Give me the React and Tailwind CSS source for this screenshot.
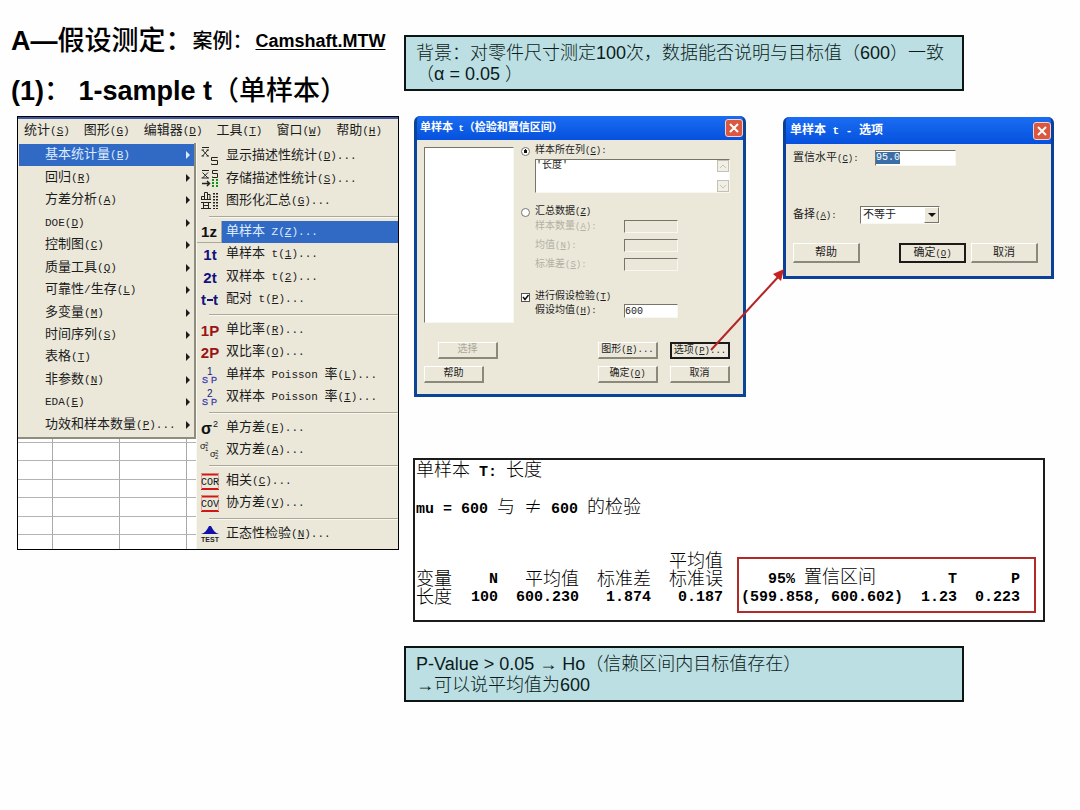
import React, { useState } from "react";

const menuBar = ["统计(S)", "图形(G)", "编辑器(D)", "工具(T)", "窗口(W)", "帮助(H)"];

const statMenu = [
  "基本统计量(B)",
  "回归(R)",
  "方差分析(A)",
  "DOE(D)",
  "控制图(C)",
  "质量工具(Q)",
  "可靠性/生存(L)",
  "多变量(M)",
  "时间序列(S)",
  "表格(T)",
  "非参数(N)",
  "EDA(E)",
  "功效和样本数量(P)...",
];

const basicMenu = [
  [
    { icon: "display", text: "显示描述性统计(D)..." },
    { icon: "store", text: "存储描述性统计(S)..." },
    { icon: "graph", text: "图形化汇总(G)..." },
  ],
  [
    { icon: "1Z", text: "单样本 Z(Z)...", active: true },
    { icon: "1t", text: "单样本 t(1)..." },
    { icon: "2t", text: "双样本 t(2)..." },
    { icon: "tt", text: "配对 t(P)..." },
  ],
  [
    { icon: "1P", text: "单比率(R)..." },
    { icon: "2P", text: "双比率(O)..." },
    { icon: "s1p", text: "单样本 Poisson 率(L)..." },
    { icon: "s2p", text: "双样本 Poisson 率(I)..." },
  ],
  [
    { icon: "var1", text: "单方差(E)..." },
    { icon: "var2", text: "双方差(A)..." },
  ],
  [
    { icon: "COR", text: "相关(C)..." },
    { icon: "COV", text: "协方差(V)..." },
  ],
  [{ icon: "test", text: "正态性检验(N)..." }],
];

// Latin runs are set smaller than the Chinese ones, the letter in brackets is the shortcut
const Mixed = ({ text, latin = "text-[11px]" }) => {
  const parts = text.split(/([\x20-\x7e]+)/).filter(Boolean);
  return (
    <span className="whitespace-pre">
      {parts.map((part, i) => {
        if (!/^[\x20-\x7e]/.test(part)) return <span key={i}>{part}</span>;
        const key = part.match(/^(.*\()(\w)(\).*)$/);
        return (
          <span key={i} className={latin}>
            {key ? (
              <>
                {key[1]}
                <u className="underline-offset-1">{key[2]}</u>
                {key[3]}
              </>
            ) : (
              part
            )}
          </span>
        );
      })}
    </span>
  );
};

const BigIcon = ({ text, color }) => (
  <text x="10" y="16" textAnchor="middle" fontSize="15" fontWeight="bold" fill={color}>
    {text}
  </text>
);

const BoxIcon = ({ text }) => (
  <>
    <path d="M1 3.5H19M1 18H19" stroke="#d01818" strokeWidth="2" />
    <path d="M1.500 3V18M18.500 3V18" stroke="#e9a49a" />
    <text
      x="10"
      y="14"
      textAnchor="middle"
      fontSize="10"
      fontFamily="Liberation Mono, monospace"
      fill="#111"
    >
      {text}
    </text>
  </>
);

const PoissonIcon = ({ n }) => (
  <>
    <text x="2" y="18" fontSize="9" fill="#3b3bb0" stroke="#3b3bb0" strokeWidth="0.300">S</text>
    <text x="11" y="18" fontSize="9" fill="#3b3bb0" stroke="#3b3bb0" strokeWidth="0.300">P</text>
    <text x="7" y="10" fontSize="10" fill="#15157a">{n}</text>
  </>
);

const icons = {
  display: (
    <>
      <path d="M2 1.500H9M2.500 4L8 10M8 4L2.500 10M1.500 10H4M6.500 10H9M1.500 4H4M6.500 4H9" stroke="#222" fill="none" />
      <path d="M17.500 12V11.500H11.500V14.500H17.500V18.500H11.500V17.500" stroke="#222" fill="none" />
    </>
  ),
  store: (
    <>
      <path d="M2 1.500H9M2.500 3.500L8 9M8 3.500L2.500 9M1.500 9H9" stroke="#222" fill="none" />
      <path d="M17.500 2V1.500H12.500V4.500H17.500V8.500H12.500V7.500" stroke="#222" fill="none" />
      <path d="M2 14.500H9M7 12L9.500 14.500L7 17" stroke="#222" fill="none" strokeWidth="1.500" />
      <path d="M13 10V19M17 10V19" stroke="#159015" strokeWidth="2" strokeDasharray="2 1" />
    </>
  ),
  graph: (
    <>
      <path
        d="M1.500 8.500V5.500H4.500V1.500H7.500V8.500M4.500 5V8.500M7.500 3.500H10V8.500M1 8.500H11M1 11.500H11M3.500 11.500V17.500M8.500 11.500V17.500M1 17.500H11M3.500 14.500H8.500"
        stroke="#222"
        fill="none"
      />
      <path d="M14 2V18M17 2V18" stroke="#222" strokeWidth="2" strokeDasharray="1.500 1.500" />
    </>
  ),
  "1Z": <BigIcon text="1z" color="#111" />,
  "1t": <BigIcon text="1t" color="#12127c" />,
  "2t": <BigIcon text="2t" color="#12127c" />,
  tt: (
    <>
      <text x="1" y="16" fontSize="15" fontWeight="bold" fill="#12127c">t</text>
      <text x="13" y="16" fontSize="15" fontWeight="bold" fill="#12127c">t</text>
      <path d="M7 11H13" stroke="#12127c" strokeWidth="2" />
    </>
  ),
  "1P": <BigIcon text="1P" color="#9a1414" />,
  "2P": <BigIcon text="2P" color="#9a1414" />,
  s1p: <PoissonIcon n="1" />,
  s2p: <PoissonIcon n="2" />,
  var1: (
    <>
      <text x="1" y="16" fontSize="16" fontWeight="bold" fill="#111">σ</text>
      <text x="13" y="9" fontSize="9" fill="#111">2</text>
    </>
  ),
  var2: (
    <>
      <text x="0" y="9" fontSize="9" fill="#111">σ</text>
      <text x="5" y="6" fontSize="6" fill="#111">2</text>
      <text x="5" y="11" fontSize="6" fill="#111">1</text>
      <text x="10" y="17" fontSize="9" fill="#111">σ</text>
      <text x="15" y="14" fontSize="6" fill="#111">2</text>
      <text x="15" y="19" fontSize="6" fill="#111">2</text>
    </>
  ),
  COR: <BoxIcon text="COR" />,
  COV: <BoxIcon text="COV" />,
  test: (
    <>
      <path d="M1 10C5 9 7 6 9 2H11C13 6 15 9 19 10Z" fill="#1212a8" />
      <text x="10" y="18" textAnchor="middle" fontSize="7" fontWeight="bold" fill="#222">TEST</text>
    </>
  ),
};

const MenuIcon = ({ name }) => (
  <svg viewBox="0 0 20 20" className="w-5 h-5" fontFamily="Liberation Sans, sans-serif" aria-hidden="true">
    {icons[name]}
  </svg>
);

const MenuPanel = () => (
  <div className="ml-[17px] mr-[5px] mt-[7px] border border-black bg-[#ebe8da] text-[13px] leading-4 text-[#1c1c1c] font-['Liberation_Mono','Noto_Sans_CJK_SC',monospace]">
    <div className="h-0.5 bg-[#3c55a5]" />
    <div className="flex h-6 items-center gap-[14px] pl-[6px]">
      {menuBar.map((item) => (
        <button key={item}>
          <Mixed text={item} />
        </button>
      ))}
    </div>
    <div className="flex">
      <div className="flex w-[178px] flex-col">
        <div className="flex h-[296px] flex-col border-b-2 border-r-2 border-[#8f8c80] pt-px pb-px pl-px">
          {statMenu.map((item, i) => (
            <button
              key={item}
              className={
                i === 0
                  ? "flex flex-1 items-center justify-between bg-[#316ac5] pl-[26px] pr-1 text-[#dcecff]"
                  : "flex flex-1 items-center justify-between pl-[26px] pr-1"
              }
            >
              <Mixed text={item} />
              <svg viewBox="0 0 4 8" className="h-2 w-1" fill="currentColor">
                <path d="M0 0L4 4L0 8Z" />
              </svg>
            </button>
          ))}
        </div>
        <div className="flex flex-1 flex-col bg-white">
          {[0, 1, 2, 3, 4, 5, 6].map((row) => (
            <div
              key={row}
              className={
                row === 0
                  ? "flex h-1 border-b border-[#b4b4b4]"
                  : row === 6
                    ? "flex h-[14px]"
                    : "flex flex-1 border-b border-[#b4b4b4]"
              }
            >
              <div className="w-[35px] border-r border-[#a9a9a9]" />
              <div className="w-[67px] border-r border-[#a9a9a9]" />
              <div className="w-[67px] border-r border-[#a9a9a9]" />
            </div>
          ))}
        </div>
      </div>
      <div className="flex h-[406px] flex-1 flex-col border-l border-[#f8f7f0] pb-1 pt-0.5">
        {basicMenu.map((group, g) => (
          <React.Fragment key={g}>
            {g > 0 && (
              <div className="flex h-2 items-center pl-3">
                <div className="h-0.5 flex-1 border-b border-t border-b-[#f8f7f0] border-t-[#aca899]" />
              </div>
            )}
            {group.map(({ icon, text, active }) => (
              <button key={text} className="flex flex-1 items-stretch text-left">
                <span
                  className={
                    active
                      ? "flex w-[25px] items-center justify-center border-b border-r border-[#aca899]"
                      : "flex w-[25px] items-center justify-center"
                  }
                >
                  <MenuIcon name={icon} />
                </span>
                <span
                  className={
                    active
                      ? "flex flex-1 items-center bg-[#316ac5] pl-1 text-[#dcecff]"
                      : "flex flex-1 items-center pl-1"
                  }
                >
                  <Mixed text={text} />
                </span>
              </button>
            ))}
          </React.Fragment>
        ))}
      </div>
    </div>
  </div>
);

const CloseButton = () => (
  <button
    aria-label="关闭"
    className="flex h-[18px] w-[18px] items-center justify-center rounded-[3px] border border-[#f3d3cb] bg-[#d9583f]"
  >
    <svg viewBox="0 0 10 10" className="h-[10px] w-[10px]">
      <path d="M1 1L9 9M9 1L1 9" stroke="#fff" strokeWidth="2" />
    </svg>
  </button>
);

const DialogButton = ({ text, variant = "normal", size = "small" }) => {
  const look = {
    normal: "border-b-2 border-r-2 border-l border-t border-b-[#8b887c] border-r-[#8b887c] border-l-white border-t-white",
    main: "border-2 border-[#1b1b1b]",
    disabled: "border-b-2 border-r-2 border-l border-t border-b-[#8b887c] border-r-[#8b887c] border-l-white border-t-white text-[#aaa797]",
  };
  return (
    <button
      disabled={variant === "disabled"}
      className={`flex items-center justify-center bg-[#ebe8da] ${look[variant]} ${
        size === "small" ? "h-[17px] w-[60px]" : "h-5 w-[67px]"
      }`}
    >
      <Mixed text={text} latin="text-[9px]" />
    </button>
  );
};

const sunken = "border border-b-[#f8f7f0] border-l-[#77756a] border-r-[#f8f7f0] border-t-[#77756a]";

const SummaryField = ({ id, label }) => (
  <div className="flex h-[13px] items-center text-[#b3b0a2]">
    <label htmlFor={id} className="w-[89px]">
      <Mixed text={label} latin="text-[9px]" />
    </label>
    <input id={id} disabled className={`h-[13px] w-[54px] ${sunken}`} />
  </div>
);

const radio =
  "h-[9px] w-[9px] appearance-none rounded-full border border-[#77756a] bg-white checked:bg-[radial-gradient(circle,#111_0_2px,#fff_2px)]";

const SampleDialog = () => {
  const [source, setSource] = useState("column");
  return (
    <div className="ml-[10px] w-[332px] rounded-t-md border-x-[3px] border-b-[3px] border-[#0b4596] bg-[#0a5be0] text-[10px] leading-3 text-[#1c1c1c] font-['Liberation_Mono','Noto_Sans_CJK_SC',monospace]">
      <div className="flex h-6 items-center justify-between rounded-t bg-linear-to-b from-[#1a6df2] to-[#0650dd] pl-[3px] text-[11px] font-bold text-white">
        <Mixed text="单样本 t（检验和置信区间）" latin="text-[9px]" />
        <CloseButton />
      </div>
      <div className="bg-[#ebe8da] pb-[11px] pl-[7px] pr-[13px] pt-1">
        <div className="flex gap-[7px]">
          <div className={`mt-[3px] h-[176px] w-[90px] bg-white ${sunken}`} />
          <div className="flex-1">
            <label className="flex h-[14px] items-center gap-[5px]">
              <input
                type="radio"
                name="source"
                checked={source === "column"}
                onChange={() => setSource("column")}
                className={radio}
              />
              <Mixed text="样本所在列(C):" latin="text-[9px]" />
            </label>
            <div className={`ml-[14px] mt-px flex h-[34px] bg-white ${sunken}`}>
              <textarea
                aria-label="样本所在列"
                defaultValue="'长度'"
                className="h-full min-w-0 flex-1 resize-none overflow-hidden bg-white outline-none"
              />
              <div className="flex w-3 flex-col justify-between text-[#c3c0b4]">
                <button aria-label="向上" className="flex h-3 items-center justify-center border border-current bg-[#f1efe6]">
                  <svg viewBox="0 0 8 5" className="w-2" fill="none" stroke="currentColor">
                    <path d="M1 4L4 1L7 4" />
                  </svg>
                </button>
                <button aria-label="向下" className="flex h-3 items-center justify-center border border-current bg-[#f1efe6]">
                  <svg viewBox="0 0 8 5" className="w-2" fill="none" stroke="currentColor">
                    <path d="M1 1L4 4L7 1" />
                  </svg>
                </button>
              </div>
            </div>
            <label className="mt-3 flex h-[14px] items-center gap-[5px]">
              <input
                type="radio"
                name="source"
                checked={source === "summary"}
                onChange={() => setSource("summary")}
                className={radio}
              />
              <Mixed text="汇总数据(Z)" latin="text-[9px]" />
            </label>
            <div className="ml-[14px] mt-px flex flex-col gap-[6px]">
              <SummaryField id="size" label="样本数量(A):" />
              <SummaryField id="mean" label="均值(N):" />
              <SummaryField id="sd" label="标准差(S):" />
            </div>
            <label className="relative mt-5 flex h-3 items-center gap-[5px]">
              <input
                type="checkbox"
                defaultChecked
                className="peer h-[9px] w-[9px] appearance-none border border-[#55534a] bg-white"
              />
              <svg
                viewBox="0 0 9 9"
                className="absolute left-0 hidden h-[9px] w-[9px] peer-checked:block"
                fill="none"
                stroke="#111"
                strokeWidth="1.500"
              >
                <path d="M2 4L4 6.500L7.500 2" />
              </svg>
              <Mixed text="进行假设检验(T)" latin="text-[9px]" />
            </label>
            <div className="ml-[14px] mt-px flex h-[14px] items-center">
              <label htmlFor="mu" className="w-[89px]">
                <Mixed text="假设均值(H):" latin="text-[9px]" />
              </label>
              <input id="mu" defaultValue="600" className={`h-[14px] w-[54px] bg-white text-[10px] ${sunken}`} />
            </div>
          </div>
        </div>
        <div className="mt-[19px] flex gap-3">
          <div className="ml-[14px] mr-auto">
            <DialogButton text="选择" variant="disabled" />
          </div>
          <DialogButton text="图形(R)..." />
          <DialogButton text="选项(P)..." variant="main" />
        </div>
        <div className="mt-[7px] flex gap-3">
          <div className="mr-auto">
            <DialogButton text="帮助" />
          </div>
          <DialogButton text="确定(O)" />
          <DialogButton text="取消" />
        </div>
      </div>
    </div>
  );
};

const OptionsDialog = () => (
  <div className="ml-[37px] mt-px w-[271px] self-start rounded-t-md border-x-[3px] border-b-[3px] border-[#0b3f9c] bg-[#0a5be0] text-[11px] leading-3 text-[#1c1c1c] font-['Liberation_Mono','Noto_Sans_CJK_SC',monospace]">
    <div className="flex h-[27px] items-center justify-between rounded-t bg-linear-to-b from-[#1a6df2] to-[#0650dd] pl-1 text-[12px] font-bold text-white">
      <Mixed text="单样本 t - 选项" latin="text-[11px]" />
      <CloseButton />
    </div>
    <div className="bg-[#ebe8da] pb-[13px] pl-[7px] pr-[13px] pt-[6px]">
      <div className="flex items-center">
        <label htmlFor="level" className="w-[82px]">
          <Mixed text="置信水平(C):" latin="text-[9px]" />
        </label>
        <div className={`flex h-4 w-[81px] items-center bg-white ${sunken}`}>
          <input id="level" defaultValue="95.0" className="h-3 w-6 bg-[#3a6ea5] text-[10px] text-white outline-none" />
        </div>
      </div>
      <div className="mt-10 flex items-center">
        <label htmlFor="alt" className="w-[67px]">
          <Mixed text="备择(A):" latin="text-[9px]" />
        </label>
        <div className="relative">
          <select id="alt" className={`block h-[18px] w-20 appearance-none bg-white pl-0.5 text-[11px] ${sunken}`}>
            <option>不等于</option>
            <option>小于</option>
            <option>大于</option>
          </select>
          <span className="pointer-events-none absolute right-px top-px flex h-4 w-[15px] items-center justify-center border border-b-[#77756a] border-l-white border-r-[#77756a] border-t-white bg-[#ebe8da]">
            <svg viewBox="0 0 8 4" className="h-1 w-2">
              <path d="M0 0H8L4 4Z" fill="#111" />
            </svg>
          </span>
        </div>
      </div>
      <div className="mt-[19px] flex gap-[5px]">
        <div className="mr-auto">
          <DialogButton text="帮助" size="large" />
        </div>
        <DialogButton text="确定(O)" variant="main" size="large" />
        <DialogButton text="取消" size="large" />
      </div>
    </div>
  </div>
);

const Report = () => (
  <div className="ml-[9px] mt-[61px] max-w-[632px] border-2 border-[#1b1b1b] bg-white pb-[13px] pl-px pt-0.5 text-[18px] font-light leading-[18px] text-black font-['Liberation_Mono','Noto_Sans_CJK_SC',monospace]">
    <p>
      <Mixed text="单样本 T: 长度" latin="text-[15px] font-bold" />
    </p>
    <p className="mt-[14px]">
      <Mixed text="mu = 600 与 " latin="text-[15px] font-bold" />
      <span className="font-['Noto_Sans_CJK_SC',sans-serif]">≠</span>
      <Mixed text=" 600 的检验" latin="text-[15px] font-bold" />
    </p>
    <div className="relative mt-[34px]">
      <table className="table-fixed text-right">
        <thead>
          <tr className="align-bottom">
            <th className="w-9 text-left font-light">变量</th>
            <th className="w-[46px] text-[15px]">N</th>
            <th className="w-[81px] font-light">平均值</th>
            <th className="w-[72px] font-light">标准差</th>
            <th className="w-[72px] font-light">
              平均值
              <br />
              标准误
            </th>
            <th className="w-[180px] pr-[27px] font-light">
              <Mixed text="95% 置信区间" latin="text-[15px] font-bold" />
            </th>
            <th className="w-[54px] text-[15px]">T</th>
            <th className="w-[63px] text-[15px]">P</th>
          </tr>
        </thead>
        <tbody>
          <tr className="text-[15px] font-bold">
            <td className="text-left text-[18px] font-light">长度</td>
            <td>100</td>
            <td>600.230</td>
            <td>1.874</td>
            <td>0.187</td>
            <td className="whitespace-nowrap">(599.858, 600.602)</td>
            <td>1.23</td>
            <td>0.223</td>
          </tr>
        </tbody>
      </table>
      <div className="absolute left-[321px] top-1 h-14 w-[299px] border-2 border-[#b02a2a]" />
    </div>
  </div>
);

const Note = ({ children }) => (
  <div className="max-w-[560px] border-2 border-[#0d1414] bg-[#bbdfe2] px-[10px] pb-1 pt-[6px] text-[18px] font-light leading-[21px] text-[#0c1a20]">
    {children}
  </div>
);

const App = () => (
  <main className="flex min-h-screen bg-[#fefefe] font-['Liberation_Sans','Noto_Sans_CJK_SC',sans-serif]">
    <div className="w-[404px] shrink-0 pt-[23px]">
      <h1 className="flex h-9 items-center whitespace-nowrap pl-[11px] text-[27px] font-bold text-black">
        A—<span className="font-medium">假设测定：</span>
        <span className="text-[20px] font-medium">案例：</span>
        <a href="#camshaft" className="ml-[3px] text-[18px] underline underline-offset-2">
          Camshaft.MTW
        </a>
      </h1>
      <h2 className="mt-[14px] flex h-9 items-center whitespace-pre pl-[11px] text-[27px] font-bold text-black">
        (1)<span className="font-medium">：</span> 1-sample t<span className="font-medium">（单样本）</span>
      </h2>
      <MenuPanel />
    </div>
    <div className="min-w-0 flex-1 pt-[35px]">
      <Note>
        <p>背景：对零件尺寸测定100次，数据能否说明与目标值（600）一致</p>
        <p>（α = 0.05 ）</p>
      </Note>
      <div className="relative mt-[25px] flex">
        <SampleDialog />
        <OptionsDialog />
        <svg
          viewBox="0 0 80 90"
          className="pointer-events-none absolute left-[304px] top-[149px] h-[90px] w-20"
          aria-hidden="true"
        >
          <path d="M3 85L71 11" stroke="#b52424" strokeWidth="2" />
          <path d="M76 4L73 16L65 9Z" fill="#c62222" />
        </svg>
      </div>
      <Report />
      <div className="mt-6">
        <Note>
          <p>P-Value &gt; 0.05 → Ho（信赖区间内目标值存在）</p>
          <p>→可以说平均值为600</p>
        </Note>
      </div>
    </div>
  </main>
);

export default App;
